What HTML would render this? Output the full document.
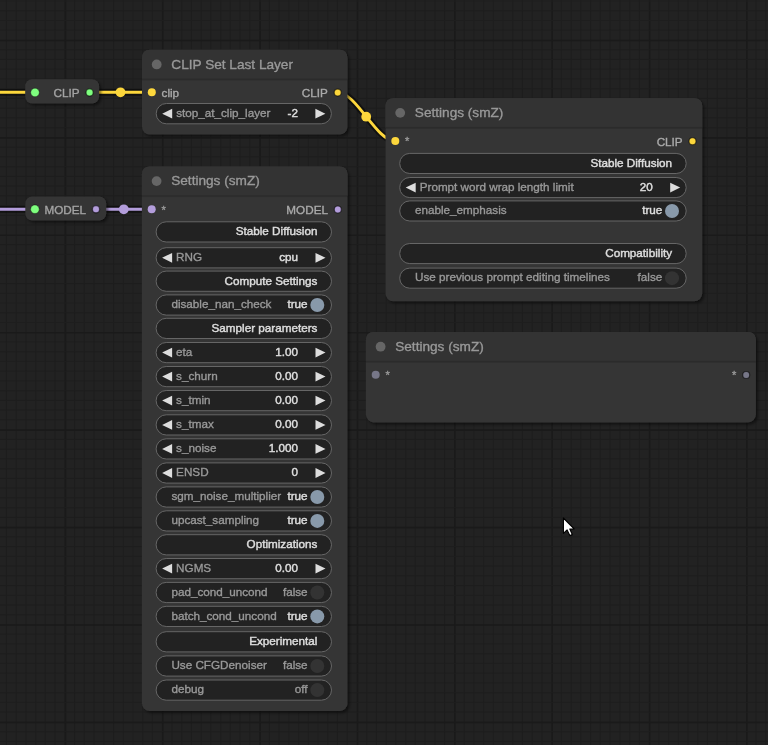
<!DOCTYPE html>
<html><head><meta charset="utf-8"><style>
html,body{margin:0;padding:0;background:#222222;}
#c{position:relative;width:768px;height:745px;overflow:hidden;background:#222222;}
</style></head><body><div id="c">
<svg width="768" height="745" viewBox="0 0 768 745" style="position:absolute;left:0;top:0;font-family:'Liberation Sans', sans-serif;will-change:transform">
<defs><filter id="sh" x="-10%" y="-10%" width="130%" height="130%"><feDropShadow dx="2" dy="2" stdDeviation="1.5" flood-color="#000" flood-opacity="0.5"/></filter></defs>
<rect x="0" y="0" width="768" height="745" fill="#222222"/>
<line x1="6.43" y1="0" x2="6.43" y2="745" stroke="#1e1e1e" stroke-width="1"/>
<line x1="16.16" y1="0" x2="16.16" y2="745" stroke="#1e1e1e" stroke-width="1"/>
<line x1="25.9" y1="0" x2="25.9" y2="745" stroke="#1e1e1e" stroke-width="1"/>
<line x1="35.64" y1="0" x2="35.64" y2="745" stroke="#1e1e1e" stroke-width="1"/>
<line x1="45.38" y1="0" x2="45.38" y2="745" stroke="#1e1e1e" stroke-width="1"/>
<line x1="55.11" y1="0" x2="55.11" y2="745" stroke="#1e1e1e" stroke-width="1"/>
<line x1="65.35" y1="0" x2="65.35" y2="745" stroke="#1a1a1a" stroke-width="1.6"/>
<line x1="74.59" y1="0" x2="74.59" y2="745" stroke="#1e1e1e" stroke-width="1"/>
<line x1="84.32" y1="0" x2="84.32" y2="745" stroke="#1e1e1e" stroke-width="1"/>
<line x1="94.06" y1="0" x2="94.06" y2="745" stroke="#1e1e1e" stroke-width="1"/>
<line x1="103.8" y1="0" x2="103.8" y2="745" stroke="#1e1e1e" stroke-width="1"/>
<line x1="113.53" y1="0" x2="113.53" y2="745" stroke="#1e1e1e" stroke-width="1"/>
<line x1="123.27" y1="0" x2="123.27" y2="745" stroke="#1e1e1e" stroke-width="1"/>
<line x1="133.01" y1="0" x2="133.01" y2="745" stroke="#1e1e1e" stroke-width="1"/>
<line x1="142.75" y1="0" x2="142.75" y2="745" stroke="#1e1e1e" stroke-width="1"/>
<line x1="152.48" y1="0" x2="152.48" y2="745" stroke="#1e1e1e" stroke-width="1"/>
<line x1="162.72" y1="0" x2="162.72" y2="745" stroke="#1a1a1a" stroke-width="1.6"/>
<line x1="171.96" y1="0" x2="171.96" y2="745" stroke="#1e1e1e" stroke-width="1"/>
<line x1="181.69" y1="0" x2="181.69" y2="745" stroke="#1e1e1e" stroke-width="1"/>
<line x1="191.43" y1="0" x2="191.43" y2="745" stroke="#1e1e1e" stroke-width="1"/>
<line x1="201.17" y1="0" x2="201.17" y2="745" stroke="#1e1e1e" stroke-width="1"/>
<line x1="210.91" y1="0" x2="210.91" y2="745" stroke="#1e1e1e" stroke-width="1"/>
<line x1="220.64" y1="0" x2="220.64" y2="745" stroke="#1e1e1e" stroke-width="1"/>
<line x1="230.38" y1="0" x2="230.38" y2="745" stroke="#1e1e1e" stroke-width="1"/>
<line x1="240.12" y1="0" x2="240.12" y2="745" stroke="#1e1e1e" stroke-width="1"/>
<line x1="249.85" y1="0" x2="249.85" y2="745" stroke="#1e1e1e" stroke-width="1"/>
<line x1="260.09" y1="0" x2="260.09" y2="745" stroke="#1a1a1a" stroke-width="1.6"/>
<line x1="269.33" y1="0" x2="269.33" y2="745" stroke="#1e1e1e" stroke-width="1"/>
<line x1="279.06" y1="0" x2="279.06" y2="745" stroke="#1e1e1e" stroke-width="1"/>
<line x1="288.8" y1="0" x2="288.8" y2="745" stroke="#1e1e1e" stroke-width="1"/>
<line x1="298.54" y1="0" x2="298.54" y2="745" stroke="#1e1e1e" stroke-width="1"/>
<line x1="308.27" y1="0" x2="308.27" y2="745" stroke="#1e1e1e" stroke-width="1"/>
<line x1="318.01" y1="0" x2="318.01" y2="745" stroke="#1e1e1e" stroke-width="1"/>
<line x1="327.75" y1="0" x2="327.75" y2="745" stroke="#1e1e1e" stroke-width="1"/>
<line x1="337.49" y1="0" x2="337.49" y2="745" stroke="#1e1e1e" stroke-width="1"/>
<line x1="347.22" y1="0" x2="347.22" y2="745" stroke="#1e1e1e" stroke-width="1"/>
<line x1="357.46" y1="0" x2="357.46" y2="745" stroke="#1a1a1a" stroke-width="1.6"/>
<line x1="366.7" y1="0" x2="366.7" y2="745" stroke="#1e1e1e" stroke-width="1"/>
<line x1="376.43" y1="0" x2="376.43" y2="745" stroke="#1e1e1e" stroke-width="1"/>
<line x1="386.17" y1="0" x2="386.17" y2="745" stroke="#1e1e1e" stroke-width="1"/>
<line x1="395.91" y1="0" x2="395.91" y2="745" stroke="#1e1e1e" stroke-width="1"/>
<line x1="405.64" y1="0" x2="405.64" y2="745" stroke="#1e1e1e" stroke-width="1"/>
<line x1="415.38" y1="0" x2="415.38" y2="745" stroke="#1e1e1e" stroke-width="1"/>
<line x1="425.12" y1="0" x2="425.12" y2="745" stroke="#1e1e1e" stroke-width="1"/>
<line x1="434.86" y1="0" x2="434.86" y2="745" stroke="#1e1e1e" stroke-width="1"/>
<line x1="444.59" y1="0" x2="444.59" y2="745" stroke="#1e1e1e" stroke-width="1"/>
<line x1="454.83" y1="0" x2="454.83" y2="745" stroke="#1a1a1a" stroke-width="1.6"/>
<line x1="464.07" y1="0" x2="464.07" y2="745" stroke="#1e1e1e" stroke-width="1"/>
<line x1="473.8" y1="0" x2="473.8" y2="745" stroke="#1e1e1e" stroke-width="1"/>
<line x1="483.54" y1="0" x2="483.54" y2="745" stroke="#1e1e1e" stroke-width="1"/>
<line x1="493.28" y1="0" x2="493.28" y2="745" stroke="#1e1e1e" stroke-width="1"/>
<line x1="503.01" y1="0" x2="503.01" y2="745" stroke="#1e1e1e" stroke-width="1"/>
<line x1="512.75" y1="0" x2="512.75" y2="745" stroke="#1e1e1e" stroke-width="1"/>
<line x1="522.49" y1="0" x2="522.49" y2="745" stroke="#1e1e1e" stroke-width="1"/>
<line x1="532.23" y1="0" x2="532.23" y2="745" stroke="#1e1e1e" stroke-width="1"/>
<line x1="541.96" y1="0" x2="541.96" y2="745" stroke="#1e1e1e" stroke-width="1"/>
<line x1="552.2" y1="0" x2="552.2" y2="745" stroke="#1a1a1a" stroke-width="1.6"/>
<line x1="561.44" y1="0" x2="561.44" y2="745" stroke="#1e1e1e" stroke-width="1"/>
<line x1="571.17" y1="0" x2="571.17" y2="745" stroke="#1e1e1e" stroke-width="1"/>
<line x1="580.91" y1="0" x2="580.91" y2="745" stroke="#1e1e1e" stroke-width="1"/>
<line x1="590.65" y1="0" x2="590.65" y2="745" stroke="#1e1e1e" stroke-width="1"/>
<line x1="600.38" y1="0" x2="600.38" y2="745" stroke="#1e1e1e" stroke-width="1"/>
<line x1="610.12" y1="0" x2="610.12" y2="745" stroke="#1e1e1e" stroke-width="1"/>
<line x1="619.86" y1="0" x2="619.86" y2="745" stroke="#1e1e1e" stroke-width="1"/>
<line x1="629.6" y1="0" x2="629.6" y2="745" stroke="#1e1e1e" stroke-width="1"/>
<line x1="639.33" y1="0" x2="639.33" y2="745" stroke="#1e1e1e" stroke-width="1"/>
<line x1="649.57" y1="0" x2="649.57" y2="745" stroke="#1a1a1a" stroke-width="1.6"/>
<line x1="658.81" y1="0" x2="658.81" y2="745" stroke="#1e1e1e" stroke-width="1"/>
<line x1="668.54" y1="0" x2="668.54" y2="745" stroke="#1e1e1e" stroke-width="1"/>
<line x1="678.28" y1="0" x2="678.28" y2="745" stroke="#1e1e1e" stroke-width="1"/>
<line x1="688.02" y1="0" x2="688.02" y2="745" stroke="#1e1e1e" stroke-width="1"/>
<line x1="697.75" y1="0" x2="697.75" y2="745" stroke="#1e1e1e" stroke-width="1"/>
<line x1="707.49" y1="0" x2="707.49" y2="745" stroke="#1e1e1e" stroke-width="1"/>
<line x1="717.23" y1="0" x2="717.23" y2="745" stroke="#1e1e1e" stroke-width="1"/>
<line x1="726.97" y1="0" x2="726.97" y2="745" stroke="#1e1e1e" stroke-width="1"/>
<line x1="736.7" y1="0" x2="736.7" y2="745" stroke="#1e1e1e" stroke-width="1"/>
<line x1="746.94" y1="0" x2="746.94" y2="745" stroke="#1a1a1a" stroke-width="1.6"/>
<line x1="756.18" y1="0" x2="756.18" y2="745" stroke="#1e1e1e" stroke-width="1"/>
<line x1="765.91" y1="0" x2="765.91" y2="745" stroke="#1e1e1e" stroke-width="1"/>
<line x1="0" y1="1.01" x2="768" y2="1.01" stroke="#1e1e1e" stroke-width="1"/>
<line x1="0" y1="10.75" x2="768" y2="10.75" stroke="#1e1e1e" stroke-width="1"/>
<line x1="0" y1="20.5" x2="768" y2="20.5" stroke="#1e1e1e" stroke-width="1"/>
<line x1="0" y1="30.24" x2="768" y2="30.24" stroke="#1e1e1e" stroke-width="1"/>
<line x1="0" y1="40.48" x2="768" y2="40.48" stroke="#1a1a1a" stroke-width="1.6"/>
<line x1="0" y1="49.72" x2="768" y2="49.72" stroke="#1e1e1e" stroke-width="1"/>
<line x1="0" y1="59.46" x2="768" y2="59.46" stroke="#1e1e1e" stroke-width="1"/>
<line x1="0" y1="69.21" x2="768" y2="69.21" stroke="#1e1e1e" stroke-width="1"/>
<line x1="0" y1="78.95" x2="768" y2="78.95" stroke="#1e1e1e" stroke-width="1"/>
<line x1="0" y1="88.69" x2="768" y2="88.69" stroke="#1e1e1e" stroke-width="1"/>
<line x1="0" y1="98.43" x2="768" y2="98.43" stroke="#1e1e1e" stroke-width="1"/>
<line x1="0" y1="108.17" x2="768" y2="108.17" stroke="#1e1e1e" stroke-width="1"/>
<line x1="0" y1="117.92" x2="768" y2="117.92" stroke="#1e1e1e" stroke-width="1"/>
<line x1="0" y1="127.66" x2="768" y2="127.66" stroke="#1e1e1e" stroke-width="1"/>
<line x1="0" y1="137.9" x2="768" y2="137.9" stroke="#1a1a1a" stroke-width="1.6"/>
<line x1="0" y1="147.14" x2="768" y2="147.14" stroke="#1e1e1e" stroke-width="1"/>
<line x1="0" y1="156.88" x2="768" y2="156.88" stroke="#1e1e1e" stroke-width="1"/>
<line x1="0" y1="166.63" x2="768" y2="166.63" stroke="#1e1e1e" stroke-width="1"/>
<line x1="0" y1="176.37" x2="768" y2="176.37" stroke="#1e1e1e" stroke-width="1"/>
<line x1="0" y1="186.11" x2="768" y2="186.11" stroke="#1e1e1e" stroke-width="1"/>
<line x1="0" y1="195.85" x2="768" y2="195.85" stroke="#1e1e1e" stroke-width="1"/>
<line x1="0" y1="205.59" x2="768" y2="205.59" stroke="#1e1e1e" stroke-width="1"/>
<line x1="0" y1="215.34" x2="768" y2="215.34" stroke="#1e1e1e" stroke-width="1"/>
<line x1="0" y1="225.08" x2="768" y2="225.08" stroke="#1e1e1e" stroke-width="1"/>
<line x1="0" y1="235.32" x2="768" y2="235.32" stroke="#1a1a1a" stroke-width="1.6"/>
<line x1="0" y1="244.56" x2="768" y2="244.56" stroke="#1e1e1e" stroke-width="1"/>
<line x1="0" y1="254.3" x2="768" y2="254.3" stroke="#1e1e1e" stroke-width="1"/>
<line x1="0" y1="264.05" x2="768" y2="264.05" stroke="#1e1e1e" stroke-width="1"/>
<line x1="0" y1="273.79" x2="768" y2="273.79" stroke="#1e1e1e" stroke-width="1"/>
<line x1="0" y1="283.53" x2="768" y2="283.53" stroke="#1e1e1e" stroke-width="1"/>
<line x1="0" y1="293.27" x2="768" y2="293.27" stroke="#1e1e1e" stroke-width="1"/>
<line x1="0" y1="303.01" x2="768" y2="303.01" stroke="#1e1e1e" stroke-width="1"/>
<line x1="0" y1="312.76" x2="768" y2="312.76" stroke="#1e1e1e" stroke-width="1"/>
<line x1="0" y1="322.5" x2="768" y2="322.5" stroke="#1e1e1e" stroke-width="1"/>
<line x1="0" y1="332.74" x2="768" y2="332.74" stroke="#1a1a1a" stroke-width="1.6"/>
<line x1="0" y1="341.98" x2="768" y2="341.98" stroke="#1e1e1e" stroke-width="1"/>
<line x1="0" y1="351.72" x2="768" y2="351.72" stroke="#1e1e1e" stroke-width="1"/>
<line x1="0" y1="361.47" x2="768" y2="361.47" stroke="#1e1e1e" stroke-width="1"/>
<line x1="0" y1="371.21" x2="768" y2="371.21" stroke="#1e1e1e" stroke-width="1"/>
<line x1="0" y1="380.95" x2="768" y2="380.95" stroke="#1e1e1e" stroke-width="1"/>
<line x1="0" y1="390.69" x2="768" y2="390.69" stroke="#1e1e1e" stroke-width="1"/>
<line x1="0" y1="400.43" x2="768" y2="400.43" stroke="#1e1e1e" stroke-width="1"/>
<line x1="0" y1="410.18" x2="768" y2="410.18" stroke="#1e1e1e" stroke-width="1"/>
<line x1="0" y1="419.92" x2="768" y2="419.92" stroke="#1e1e1e" stroke-width="1"/>
<line x1="0" y1="430.16" x2="768" y2="430.16" stroke="#1a1a1a" stroke-width="1.6"/>
<line x1="0" y1="439.4" x2="768" y2="439.4" stroke="#1e1e1e" stroke-width="1"/>
<line x1="0" y1="449.14" x2="768" y2="449.14" stroke="#1e1e1e" stroke-width="1"/>
<line x1="0" y1="458.89" x2="768" y2="458.89" stroke="#1e1e1e" stroke-width="1"/>
<line x1="0" y1="468.63" x2="768" y2="468.63" stroke="#1e1e1e" stroke-width="1"/>
<line x1="0" y1="478.37" x2="768" y2="478.37" stroke="#1e1e1e" stroke-width="1"/>
<line x1="0" y1="488.11" x2="768" y2="488.11" stroke="#1e1e1e" stroke-width="1"/>
<line x1="0" y1="497.85" x2="768" y2="497.85" stroke="#1e1e1e" stroke-width="1"/>
<line x1="0" y1="507.6" x2="768" y2="507.6" stroke="#1e1e1e" stroke-width="1"/>
<line x1="0" y1="517.34" x2="768" y2="517.34" stroke="#1e1e1e" stroke-width="1"/>
<line x1="0" y1="527.58" x2="768" y2="527.58" stroke="#1a1a1a" stroke-width="1.6"/>
<line x1="0" y1="536.82" x2="768" y2="536.82" stroke="#1e1e1e" stroke-width="1"/>
<line x1="0" y1="546.56" x2="768" y2="546.56" stroke="#1e1e1e" stroke-width="1"/>
<line x1="0" y1="556.31" x2="768" y2="556.31" stroke="#1e1e1e" stroke-width="1"/>
<line x1="0" y1="566.05" x2="768" y2="566.05" stroke="#1e1e1e" stroke-width="1"/>
<line x1="0" y1="575.79" x2="768" y2="575.79" stroke="#1e1e1e" stroke-width="1"/>
<line x1="0" y1="585.53" x2="768" y2="585.53" stroke="#1e1e1e" stroke-width="1"/>
<line x1="0" y1="595.27" x2="768" y2="595.27" stroke="#1e1e1e" stroke-width="1"/>
<line x1="0" y1="605.02" x2="768" y2="605.02" stroke="#1e1e1e" stroke-width="1"/>
<line x1="0" y1="614.76" x2="768" y2="614.76" stroke="#1e1e1e" stroke-width="1"/>
<line x1="0" y1="625" x2="768" y2="625" stroke="#1a1a1a" stroke-width="1.6"/>
<line x1="0" y1="634.24" x2="768" y2="634.24" stroke="#1e1e1e" stroke-width="1"/>
<line x1="0" y1="643.98" x2="768" y2="643.98" stroke="#1e1e1e" stroke-width="1"/>
<line x1="0" y1="653.73" x2="768" y2="653.73" stroke="#1e1e1e" stroke-width="1"/>
<line x1="0" y1="663.47" x2="768" y2="663.47" stroke="#1e1e1e" stroke-width="1"/>
<line x1="0" y1="673.21" x2="768" y2="673.21" stroke="#1e1e1e" stroke-width="1"/>
<line x1="0" y1="682.95" x2="768" y2="682.95" stroke="#1e1e1e" stroke-width="1"/>
<line x1="0" y1="692.69" x2="768" y2="692.69" stroke="#1e1e1e" stroke-width="1"/>
<line x1="0" y1="702.44" x2="768" y2="702.44" stroke="#1e1e1e" stroke-width="1"/>
<line x1="0" y1="712.18" x2="768" y2="712.18" stroke="#1e1e1e" stroke-width="1"/>
<line x1="0" y1="722.42" x2="768" y2="722.42" stroke="#1a1a1a" stroke-width="1.6"/>
<line x1="0" y1="731.66" x2="768" y2="731.66" stroke="#1e1e1e" stroke-width="1"/>
<line x1="0" y1="741.4" x2="768" y2="741.4" stroke="#1e1e1e" stroke-width="1"/>
<path d="M-5,92.3 L35,92.3" stroke="rgba(0,0,0,0.5)" stroke-width="6.8" fill="none" stroke-linecap="round"/>
<path d="M-5,92.3 L35,92.3" stroke="#fdd73c" stroke-width="2.9" fill="none" stroke-linecap="round"/>
<path d="M89.3,92.3 L151.9,92.3" stroke="rgba(0,0,0,0.5)" stroke-width="6.8" fill="none" stroke-linecap="round"/>
<path d="M89.3,92.3 L151.9,92.3" stroke="#fdd73c" stroke-width="2.9" fill="none" stroke-linecap="round"/>
<path d="M-5,209.3 L35,209.3" stroke="rgba(0,0,0,0.5)" stroke-width="6.8" fill="none" stroke-linecap="round"/>
<path d="M-5,209.3 L35,209.3" stroke="#b39ddb" stroke-width="2.9" fill="none" stroke-linecap="round"/>
<path d="M96,209.3 L151.8,209.3" stroke="rgba(0,0,0,0.5)" stroke-width="6.8" fill="none" stroke-linecap="round"/>
<path d="M96,209.3 L151.8,209.3" stroke="#b39ddb" stroke-width="2.9" fill="none" stroke-linecap="round"/>
<path d="M337.6,92.4 C356.4,92.4 376.2,141 395,141" stroke="rgba(0,0,0,0.5)" stroke-width="6.8" fill="none"/>
<path d="M337.6,92.4 C356.4,92.4 376.2,141 395,141" stroke="#fdd73c" stroke-width="2.9" fill="none"/>
<rect x="25.2" y="79.2" width="73.9" height="24.3" rx="7" fill="#353535" filter="url(#sh)"/>
<circle cx="35" cy="92.45" r="4.3" fill="#7fff7f" stroke="rgba(0,0,0,0.35)" stroke-width="1"/>
<circle cx="89.6" cy="92.45" r="3.6" fill="#7fff7f" stroke="rgba(0,0,0,0.55)" stroke-width="1.3"/>
<text x="79.6" y="96.75" font-size="11.7" fill="#a4a4a4" stroke="#a4a4a4" stroke-width="0.35" text-anchor="end" font-weight="normal">CLIP</text>
<rect x="25.3" y="196.4" width="80.9" height="24.2" rx="7" fill="#353535" filter="url(#sh)"/>
<circle cx="34.9" cy="209.2" r="4.3" fill="#7fff7f" stroke="rgba(0,0,0,0.35)" stroke-width="1"/>
<circle cx="96" cy="209.2" r="3.6" fill="#b39ddb" stroke="rgba(0,0,0,0.55)" stroke-width="1.3"/>
<text x="86" y="213.5" font-size="11.7" fill="#a4a4a4" stroke="#a4a4a4" stroke-width="0.35" text-anchor="end" font-weight="normal">MODEL</text>
<circle cx="120.5" cy="92.3" r="4.9" fill="#fdd73c"/>
<circle cx="123.8" cy="209.3" r="4.9" fill="#b39ddb"/>
<circle cx="366.2" cy="116.7" r="4.9" fill="#fdd73c"/>
<rect x="142" y="49.86" width="205.4" height="84.6" rx="7.8" fill="#353535" filter="url(#sh)"/>
<path d="M142,79.26 V57.66 Q142,49.86 149.8,49.86 H339.6 Q347.4,49.86 347.4,57.66 V79.26 Z" fill="#333333"/>
<rect x="142" y="78.51" width="205.4" height="1.95" rx="0" fill="rgba(0,0,0,0.14)"/>
<circle cx="156.7" cy="64.46" r="4.9" fill="#666666"/>
<text x="171.3" y="68.66" font-size="13.64" fill="#999999" stroke="#999999" stroke-width="0.35" text-anchor="start" font-weight="normal">CLIP Set Last Layer</text>
<circle cx="151.8" cy="92.36" r="4" fill="#fdd73c"/>
<text x="161.55" y="97.26" font-size="11.7" fill="#aaaaaa" stroke="#aaaaaa" stroke-width="0.35" text-anchor="start" font-weight="normal">clip</text>
<circle cx="337.7" cy="92.56" r="3.5" fill="#fdd73c" stroke="rgba(0,0,0,0.55)" stroke-width="1.2"/>
<text x="327.85" y="97.26" font-size="11.7" fill="#aaaaaa" stroke="#aaaaaa" stroke-width="0.35" text-anchor="end" font-weight="normal">CLIP</text>
<rect x="156.2" y="103.5" width="175.2" height="20.3" rx="10.15" fill="#222222" stroke="#666666" stroke-width="1"/>
<path d="M172.2,108.75 L162.2,113.65 L172.2,118.55 Z" fill="#dddddd"/>
<path d="M315.4,108.75 L325.4,113.65 L315.4,118.55 Z" fill="#dddddd"/>
<text x="176.2" y="116.95" font-size="11.7" fill="#999999" stroke="#999999" stroke-width="0.35" text-anchor="start" font-weight="normal">stop_at_clip_layer</text>
<text x="298" y="116.95" font-size="11.7" fill="#dddddd" stroke="#dddddd" stroke-width="0.45" text-anchor="end" font-weight="normal">-2</text>
<rect x="141.9" y="166.5" width="205.6" height="544.6" rx="7.8" fill="#353535" filter="url(#sh)"/>
<path d="M141.9,195.9 V174.3 Q141.9,166.5 149.7,166.5 H339.7 Q347.5,166.5 347.5,174.3 V195.9 Z" fill="#333333"/>
<rect x="141.9" y="195.15" width="205.6" height="1.95" rx="0" fill="rgba(0,0,0,0.14)"/>
<circle cx="156.6" cy="181.1" r="4.9" fill="#666666"/>
<text x="171.2" y="185.3" font-size="13.64" fill="#999999" stroke="#999999" stroke-width="0.35" text-anchor="start" font-weight="normal">Settings (smZ)</text>
<circle cx="151.7" cy="209.3" r="4" fill="#b39ddb"/>
<text x="161.45" y="213.5" font-size="11.11" fill="#9a9a9a" stroke="#9a9a9a" stroke-width="0.35" text-anchor="start" font-weight="normal">*</text>
<circle cx="337.8" cy="209.5" r="3.5" fill="#b39ddb" stroke="rgba(0,0,0,0.55)" stroke-width="1.2"/>
<text x="327.95" y="214.2" font-size="11.7" fill="#aaaaaa" stroke="#aaaaaa" stroke-width="0.35" text-anchor="end" font-weight="normal">MODEL</text>
<rect x="156.1" y="221.8" width="175.4" height="20.2" rx="10.1" fill="#222222" stroke="#666666" stroke-width="1"/>
<text x="317.4" y="235.2" font-size="11.7" fill="#dddddd" stroke="#dddddd" stroke-width="0.45" text-anchor="end" font-weight="normal">Stable Diffusion</text>
<rect x="156.1" y="247.7" width="175.4" height="20.2" rx="10.1" fill="#222222" stroke="#666666" stroke-width="1"/>
<path d="M172.1,252.9 L162.1,257.8 L172.1,262.7 Z" fill="#dddddd"/>
<path d="M315.5,252.9 L325.5,257.8 L315.5,262.7 Z" fill="#dddddd"/>
<text x="176.1" y="261.1" font-size="11.7" fill="#999999" stroke="#999999" stroke-width="0.35" text-anchor="start" font-weight="normal">RNG</text>
<text x="298.1" y="261.1" font-size="11.7" fill="#dddddd" stroke="#dddddd" stroke-width="0.45" text-anchor="end" font-weight="normal">cpu</text>
<rect x="156.1" y="271.1" width="175.4" height="20.2" rx="10.1" fill="#222222" stroke="#666666" stroke-width="1"/>
<text x="317.4" y="284.5" font-size="11.7" fill="#dddddd" stroke="#dddddd" stroke-width="0.45" text-anchor="end" font-weight="normal">Compute Settings</text>
<rect x="156.1" y="294.9" width="175.4" height="20.2" rx="10.1" fill="#222222" stroke="#666666" stroke-width="1"/>
<text x="171.4" y="308.3" font-size="11.7" fill="#999999" stroke="#999999" stroke-width="0.35" text-anchor="start" font-weight="normal">disable_nan_check</text>
<circle cx="317.3" cy="305" r="7" fill="#8899aa"/>
<text x="307.6" y="308.3" font-size="11.7" fill="#dddddd" stroke="#dddddd" stroke-width="0.45" text-anchor="end" font-weight="normal">true</text>
<rect x="156.1" y="318.3" width="175.4" height="20.2" rx="10.1" fill="#222222" stroke="#666666" stroke-width="1"/>
<text x="317.4" y="331.7" font-size="11.7" fill="#dddddd" stroke="#dddddd" stroke-width="0.45" text-anchor="end" font-weight="normal">Sampler parameters</text>
<rect x="156.1" y="342.5" width="175.4" height="20.2" rx="10.1" fill="#222222" stroke="#666666" stroke-width="1"/>
<path d="M172.1,347.7 L162.1,352.6 L172.1,357.5 Z" fill="#dddddd"/>
<path d="M315.5,347.7 L325.5,352.6 L315.5,357.5 Z" fill="#dddddd"/>
<text x="176.1" y="355.9" font-size="11.7" fill="#999999" stroke="#999999" stroke-width="0.35" text-anchor="start" font-weight="normal">eta</text>
<text x="298.1" y="355.9" font-size="11.7" fill="#dddddd" stroke="#dddddd" stroke-width="0.45" text-anchor="end" font-weight="normal">1.00</text>
<rect x="156.1" y="366.5" width="175.4" height="20.2" rx="10.1" fill="#222222" stroke="#666666" stroke-width="1"/>
<path d="M172.1,371.7 L162.1,376.6 L172.1,381.5 Z" fill="#dddddd"/>
<path d="M315.5,371.7 L325.5,376.6 L315.5,381.5 Z" fill="#dddddd"/>
<text x="176.1" y="379.9" font-size="11.7" fill="#999999" stroke="#999999" stroke-width="0.35" text-anchor="start" font-weight="normal">s_churn</text>
<text x="298.1" y="379.9" font-size="11.7" fill="#dddddd" stroke="#dddddd" stroke-width="0.45" text-anchor="end" font-weight="normal">0.00</text>
<rect x="156.1" y="390.5" width="175.4" height="20.2" rx="10.1" fill="#222222" stroke="#666666" stroke-width="1"/>
<path d="M172.1,395.7 L162.1,400.6 L172.1,405.5 Z" fill="#dddddd"/>
<path d="M315.5,395.7 L325.5,400.6 L315.5,405.5 Z" fill="#dddddd"/>
<text x="176.1" y="403.9" font-size="11.7" fill="#999999" stroke="#999999" stroke-width="0.35" text-anchor="start" font-weight="normal">s_tmin</text>
<text x="298.1" y="403.9" font-size="11.7" fill="#dddddd" stroke="#dddddd" stroke-width="0.45" text-anchor="end" font-weight="normal">0.00</text>
<rect x="156.1" y="414.8" width="175.4" height="20.2" rx="10.1" fill="#222222" stroke="#666666" stroke-width="1"/>
<path d="M172.1,420 L162.1,424.9 L172.1,429.8 Z" fill="#dddddd"/>
<path d="M315.5,420 L325.5,424.9 L315.5,429.8 Z" fill="#dddddd"/>
<text x="176.1" y="428.2" font-size="11.7" fill="#999999" stroke="#999999" stroke-width="0.35" text-anchor="start" font-weight="normal">s_tmax</text>
<text x="298.1" y="428.2" font-size="11.7" fill="#dddddd" stroke="#dddddd" stroke-width="0.45" text-anchor="end" font-weight="normal">0.00</text>
<rect x="156.1" y="438.8" width="175.4" height="20.2" rx="10.1" fill="#222222" stroke="#666666" stroke-width="1"/>
<path d="M172.1,444 L162.1,448.9 L172.1,453.8 Z" fill="#dddddd"/>
<path d="M315.5,444 L325.5,448.9 L315.5,453.8 Z" fill="#dddddd"/>
<text x="176.1" y="452.2" font-size="11.7" fill="#999999" stroke="#999999" stroke-width="0.35" text-anchor="start" font-weight="normal">s_noise</text>
<text x="298.1" y="452.2" font-size="11.7" fill="#dddddd" stroke="#dddddd" stroke-width="0.45" text-anchor="end" font-weight="normal">1.000</text>
<rect x="156.1" y="462.9" width="175.4" height="20.2" rx="10.1" fill="#222222" stroke="#666666" stroke-width="1"/>
<path d="M172.1,468.1 L162.1,473 L172.1,477.9 Z" fill="#dddddd"/>
<path d="M315.5,468.1 L325.5,473 L315.5,477.9 Z" fill="#dddddd"/>
<text x="176.1" y="476.3" font-size="11.7" fill="#999999" stroke="#999999" stroke-width="0.35" text-anchor="start" font-weight="normal">ENSD</text>
<text x="298.1" y="476.3" font-size="11.7" fill="#dddddd" stroke="#dddddd" stroke-width="0.45" text-anchor="end" font-weight="normal">0</text>
<rect x="156.1" y="486.9" width="175.4" height="20.2" rx="10.1" fill="#222222" stroke="#666666" stroke-width="1"/>
<text x="171.4" y="500.3" font-size="11.7" fill="#999999" stroke="#999999" stroke-width="0.35" text-anchor="start" font-weight="normal">sgm_noise_multiplier</text>
<circle cx="317.3" cy="497" r="7" fill="#8899aa"/>
<text x="307.6" y="500.3" font-size="11.7" fill="#dddddd" stroke="#dddddd" stroke-width="0.45" text-anchor="end" font-weight="normal">true</text>
<rect x="156.1" y="510.8" width="175.4" height="20.2" rx="10.1" fill="#222222" stroke="#666666" stroke-width="1"/>
<text x="171.4" y="524.2" font-size="11.7" fill="#999999" stroke="#999999" stroke-width="0.35" text-anchor="start" font-weight="normal">upcast_sampling</text>
<circle cx="317.3" cy="520.9" r="7" fill="#8899aa"/>
<text x="307.6" y="524.2" font-size="11.7" fill="#dddddd" stroke="#dddddd" stroke-width="0.45" text-anchor="end" font-weight="normal">true</text>
<rect x="156.1" y="534.7" width="175.4" height="20.2" rx="10.1" fill="#222222" stroke="#666666" stroke-width="1"/>
<text x="317.4" y="548.1" font-size="11.7" fill="#dddddd" stroke="#dddddd" stroke-width="0.45" text-anchor="end" font-weight="normal">Optimizations</text>
<rect x="156.1" y="558.5" width="175.4" height="20.2" rx="10.1" fill="#222222" stroke="#666666" stroke-width="1"/>
<path d="M172.1,563.7 L162.1,568.6 L172.1,573.5 Z" fill="#dddddd"/>
<path d="M315.5,563.7 L325.5,568.6 L315.5,573.5 Z" fill="#dddddd"/>
<text x="176.1" y="571.9" font-size="11.7" fill="#999999" stroke="#999999" stroke-width="0.35" text-anchor="start" font-weight="normal">NGMS</text>
<text x="298.1" y="571.9" font-size="11.7" fill="#dddddd" stroke="#dddddd" stroke-width="0.45" text-anchor="end" font-weight="normal">0.00</text>
<rect x="156.1" y="582.4" width="175.4" height="20.2" rx="10.1" fill="#222222" stroke="#666666" stroke-width="1"/>
<text x="171.4" y="595.8" font-size="11.7" fill="#999999" stroke="#999999" stroke-width="0.35" text-anchor="start" font-weight="normal">pad_cond_uncond</text>
<circle cx="317.3" cy="592.5" r="7" fill="#333333"/>
<text x="307.6" y="595.8" font-size="11.7" fill="#999999" stroke="#999999" stroke-width="0.35" text-anchor="end" font-weight="normal">false</text>
<rect x="156.1" y="606.3" width="175.4" height="20.2" rx="10.1" fill="#222222" stroke="#666666" stroke-width="1"/>
<text x="171.4" y="619.7" font-size="11.7" fill="#999999" stroke="#999999" stroke-width="0.35" text-anchor="start" font-weight="normal">batch_cond_uncond</text>
<circle cx="317.3" cy="616.4" r="7" fill="#8899aa"/>
<text x="307.6" y="619.7" font-size="11.7" fill="#dddddd" stroke="#dddddd" stroke-width="0.45" text-anchor="end" font-weight="normal">true</text>
<rect x="156.1" y="631.7" width="175.4" height="20.2" rx="10.1" fill="#222222" stroke="#666666" stroke-width="1"/>
<text x="317.4" y="645.1" font-size="11.7" fill="#dddddd" stroke="#dddddd" stroke-width="0.45" text-anchor="end" font-weight="normal">Experimental</text>
<rect x="156.1" y="655.9" width="175.4" height="20.2" rx="10.1" fill="#222222" stroke="#666666" stroke-width="1"/>
<text x="171.4" y="669.3" font-size="11.7" fill="#999999" stroke="#999999" stroke-width="0.35" text-anchor="start" font-weight="normal">Use CFGDenoiser</text>
<circle cx="317.3" cy="666" r="7" fill="#333333"/>
<text x="307.6" y="669.3" font-size="11.7" fill="#999999" stroke="#999999" stroke-width="0.35" text-anchor="end" font-weight="normal">false</text>
<rect x="156.1" y="680" width="175.4" height="20.2" rx="10.1" fill="#222222" stroke="#666666" stroke-width="1"/>
<text x="171.4" y="693.4" font-size="11.7" fill="#999999" stroke="#999999" stroke-width="0.35" text-anchor="start" font-weight="normal">debug</text>
<circle cx="317.3" cy="690.1" r="7" fill="#333333"/>
<text x="307.6" y="693.4" font-size="11.7" fill="#999999" stroke="#999999" stroke-width="0.35" text-anchor="end" font-weight="normal">off</text>
<rect x="385.5" y="98.25" width="316.7" height="203.1" rx="7.8" fill="#353535" filter="url(#sh)"/>
<path d="M385.5,127.65 V106.05 Q385.5,98.25 393.3,98.25 H694.4 Q702.2,98.25 702.2,106.05 V127.65 Z" fill="#333333"/>
<rect x="385.5" y="126.9" width="316.7" height="1.95" rx="0" fill="rgba(0,0,0,0.14)"/>
<circle cx="400.2" cy="112.85" r="4.9" fill="#666666"/>
<text x="414.8" y="117.05" font-size="13.64" fill="#999999" stroke="#999999" stroke-width="0.35" text-anchor="start" font-weight="normal">Settings (smZ)</text>
<circle cx="395.3" cy="141.05" r="4" fill="#fdd73c"/>
<text x="405.05" y="145.25" font-size="11.11" fill="#9a9a9a" stroke="#9a9a9a" stroke-width="0.35" text-anchor="start" font-weight="normal">*</text>
<circle cx="692.5" cy="141.25" r="3.5" fill="#fdd73c" stroke="rgba(0,0,0,0.55)" stroke-width="1.2"/>
<text x="682.65" y="145.95" font-size="11.7" fill="#aaaaaa" stroke="#aaaaaa" stroke-width="0.35" text-anchor="end" font-weight="normal">CLIP</text>
<rect x="399.7" y="153.4" width="286.5" height="20.1" rx="10.05" fill="#222222" stroke="#666666" stroke-width="1"/>
<text x="672.1" y="166.75" font-size="11.7" fill="#dddddd" stroke="#dddddd" stroke-width="0.45" text-anchor="end" font-weight="normal">Stable Diffusion</text>
<rect x="399.7" y="177.5" width="286.5" height="20.1" rx="10.05" fill="#222222" stroke="#666666" stroke-width="1"/>
<path d="M415.7,182.65 L405.7,187.55 L415.7,192.45 Z" fill="#dddddd"/>
<path d="M670.2,182.65 L680.2,187.55 L670.2,192.45 Z" fill="#dddddd"/>
<text x="419.7" y="190.85" font-size="11.7" fill="#999999" stroke="#999999" stroke-width="0.35" text-anchor="start" font-weight="normal">Prompt word wrap length limit</text>
<text x="652.8" y="190.85" font-size="11.7" fill="#dddddd" stroke="#dddddd" stroke-width="0.45" text-anchor="end" font-weight="normal">20</text>
<rect x="399.7" y="200.9" width="286.5" height="20.1" rx="10.05" fill="#222222" stroke="#666666" stroke-width="1"/>
<text x="415" y="214.25" font-size="11.7" fill="#999999" stroke="#999999" stroke-width="0.35" text-anchor="start" font-weight="normal">enable_emphasis</text>
<circle cx="672" cy="210.95" r="7" fill="#8899aa"/>
<text x="662.3" y="214.25" font-size="11.7" fill="#dddddd" stroke="#dddddd" stroke-width="0.45" text-anchor="end" font-weight="normal">true</text>
<rect x="399.7" y="243.5" width="286.5" height="20.1" rx="10.05" fill="#222222" stroke="#666666" stroke-width="1"/>
<text x="672.1" y="256.85" font-size="11.7" fill="#dddddd" stroke="#dddddd" stroke-width="0.45" text-anchor="end" font-weight="normal">Compatibility</text>
<rect x="399.7" y="268.1" width="286.5" height="20.1" rx="10.05" fill="#222222" stroke="#666666" stroke-width="1"/>
<text x="415" y="281.45" font-size="11.7" fill="#999999" stroke="#999999" stroke-width="0.35" text-anchor="start" font-weight="normal">Use previous prompt editing timelines</text>
<circle cx="672" cy="278.15" r="7" fill="#333333"/>
<text x="662.3" y="281.45" font-size="11.7" fill="#999999" stroke="#999999" stroke-width="0.35" text-anchor="end" font-weight="normal">false</text>
<rect x="365.9" y="332.1" width="390" height="90.3" rx="7.8" fill="#353535" filter="url(#sh)"/>
<path d="M365.9,361.5 V339.9 Q365.9,332.1 373.7,332.1 H748.1 Q755.9,332.1 755.9,339.9 V361.5 Z" fill="#333333"/>
<rect x="365.9" y="360.75" width="390" height="1.95" rx="0" fill="rgba(0,0,0,0.14)"/>
<circle cx="380.6" cy="346.7" r="4.9" fill="#666666"/>
<text x="395.2" y="350.9" font-size="13.64" fill="#999999" stroke="#999999" stroke-width="0.35" text-anchor="start" font-weight="normal">Settings (smZ)</text>
<circle cx="375.7" cy="374.8" r="4" fill="#777788"/>
<text x="385.45" y="379" font-size="11.11" fill="#9a9a9a" stroke="#9a9a9a" stroke-width="0.35" text-anchor="start" font-weight="normal">*</text>
<circle cx="746.2" cy="375" r="3.5" fill="#777788" stroke="rgba(0,0,0,0.55)" stroke-width="1.2"/>
<text x="736.35" y="379" font-size="11.11" fill="#9a9a9a" stroke="#9a9a9a" stroke-width="0.35" text-anchor="end" font-weight="normal">*</text>
<path d="M563.4,518 L563.4,533.3 L567.1,529.9 L569.8,535.6 L572.3,534.6 L569.8,529 L574.1,528.9 Z" fill="#fff" stroke="#000" stroke-width="1.15" stroke-linejoin="round"/>
</svg>
</div></body></html>
